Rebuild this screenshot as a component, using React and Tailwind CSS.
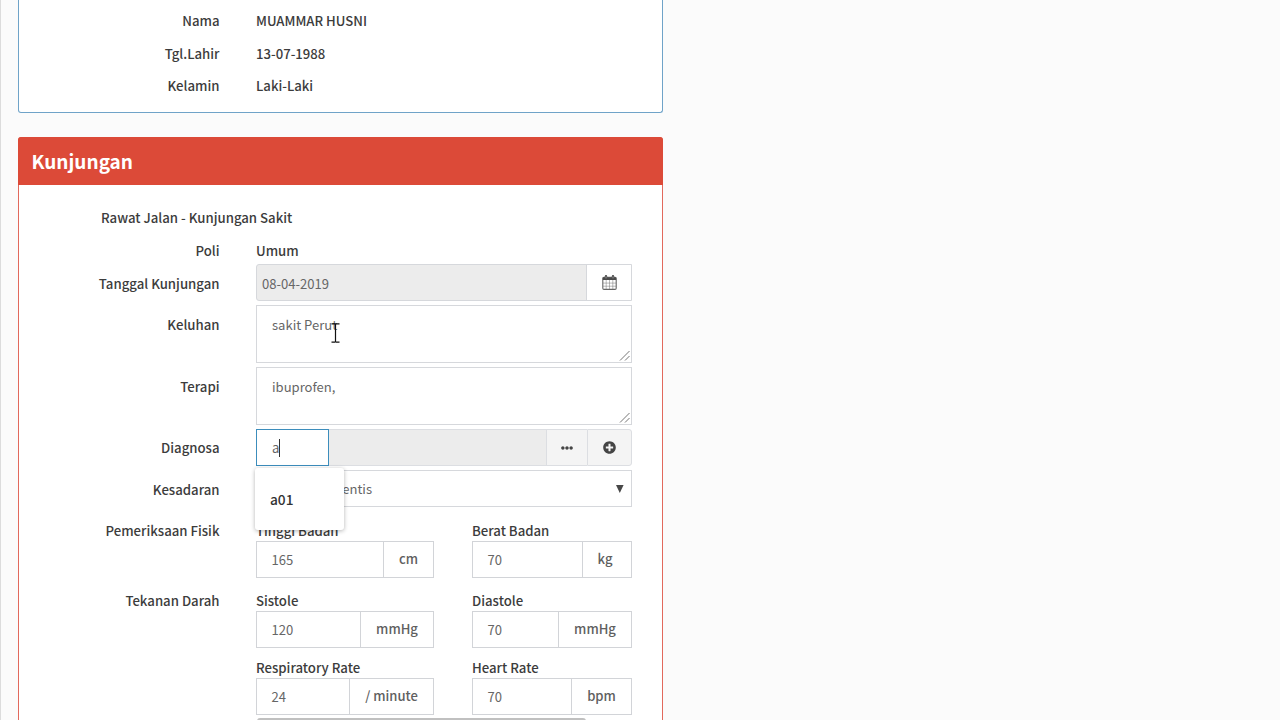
import React from "react";
import { FaEllipsisH, FaPlusCircle } from "react-icons/fa";

function InfoRow({ label, value }) {
  return (
    <div className="flex h-[32.6px] gap-9 font-medium leading-[33px]">
      <span className="w-[201px] pr-[0.5px] text-right">{label}</span>
      <span className="text-[13.15px]">{value}</span>
    </div>
  );
}

function FormRow({ label, className = "", labelClass = "leading-[37px]", children }) {
  return (
    <div className={`flex gap-9 ${className}`}>
      <span className={`h-0 w-[201px] shrink-0 pr-[0.5px] text-right font-medium ${labelClass}`}>{label}</span>
      {children}
    </div>
  );
}

function TextBox({ children }) {
  return (
    <div className="relative h-[58px] w-[376px] border border-[#d6d8dc] bg-white px-[15px] pt-2 text-[13.05px] leading-[21px] text-[#666]">
      {children}
      <svg className="absolute bottom-0 right-0 h-3 w-3" viewBox="0 0 12 12" stroke="#777" strokeWidth="1">
        <path d="M1 10.5 10.5 1M6 10.5 10.5 6" />
      </svg>
    </div>
  );
}

function UnitInput({ label, value, unit, width, unitWidth }) {
  return (
    <div className={width}>
      <div className="h-5 font-medium leading-[19px]">{label}</div>
      <div className="flex h-[37px] border border-[#d2d4d8] bg-white text-[13.05px]">
        <span className="flex-1 pl-[14.5px] leading-[35px] text-[#666]">{value}</span>
        <span className={`border-l border-[#d2d4d8] text-center font-medium leading-[33px] text-[#606060] ${unitWidth}`}>
          {unit}
        </span>
      </div>
    </div>
  );
}

function CalendarIcon() {
  return (
    <svg className="h-[15px] w-[15px]" viewBox="0 0 15 15" fill="none" stroke="#4a4a4a">
      <rect x="0.8" y="2.4" width="13.4" height="12" rx="1.2" stroke="#666" strokeWidth="1.1" />
      <path d="M.8 2.5h13.4v2.5H.8z" fill="#4a4a4a" stroke="none" />
      <path d="M4 1.2v2M11 1.2v2" strokeWidth="2.4" strokeLinecap="round" />
      <path d="M4 1.4v2M11 1.4v2" stroke="#bbb" strokeWidth=".7" />
      <path d="M4.2 5v9M7.5 5v9M10.8 5v9M1 8.1h13M1 11.2h13" stroke="#777" strokeWidth=".5" />
    </svg>
  );
}

export default function App() {
  return (
    <div className="relative h-[720px] w-[1280px] overflow-hidden border-l border-[#dcdcdc] bg-[#fbfbfb] pl-[17px] font-['Noto_Sans_CJK_JP','Noto_Sans_CJK_SC',sans-serif] text-[13.2px] text-[#3c3c3c]">
      <section className="h-[113px] w-[645px] rounded-b-[3px] border border-t-0 border-[#6fa3c8] bg-white pt-1">
        <InfoRow label="Nama" value="MUAMMAR HUSNI" />
        <InfoRow label="Tgl.Lahir" value="13-07-1988" />
        <InfoRow label="Kelamin" value="Laki-Laki" />
      </section>

      <section className="mt-6 h-[620px] w-[645px] rounded-t-[3px] border border-[#e2695c] bg-white">
        <h3 className="-mx-px -mt-px h-12 rounded-t-[3px] bg-[#dc4a38] pl-[13.5px] text-[19px] font-bold leading-[47px] text-white">
          Kunjungan
        </h3>

        <div className="pt-4">
          <div className="h-[33px] pl-[82px] font-medium leading-[33px]">Rawat Jalan - Kunjungan Sakit</div>
          <FormRow label="Poli" className="h-[30px]" labelClass="leading-[33px]">
            <span className="font-medium leading-[33px]">Umum</span>
          </FormRow>

          <FormRow label="Tanggal Kunjungan" className="mb-1" labelClass="leading-[39px]">
            <div className="flex h-[37px] w-[376px] rounded-l-[3px] border border-[#d6d8dc] bg-[#ececec] text-[13.05px] leading-[37px]">
              <span className="flex-1 pl-[5px] text-[#666]">08-04-2019</span>
              <span className="flex w-[45px] items-center justify-center border-l border-[#d6d8dc] bg-white">
                <CalendarIcon />
              </span>
            </div>
          </FormRow>

          <FormRow label="Keluhan" className="mb-1" labelClass="leading-[39px]">
            <TextBox>sakit Perut</TextBox>
          </FormRow>
          <FormRow label="Terapi" className="mb-1" labelClass="leading-[39px]">
            <TextBox>ibuprofen,</TextBox>
          </FormRow>

          <FormRow label="Diagnosa" className="mb-1">
            <div className="relative flex h-[37px] w-[376px]">
              <div className="flex w-[73px] items-center border border-[#3c8dbc] bg-white pl-[15px] text-[#666]">
                a<span className="h-[18px] w-px bg-[#333]" />
              </div>
              <div className="flex-1 border-y border-[#dcdee2] bg-[#ececec]" />
              <div className="flex w-[41px] items-center justify-center border border-r-0 border-[#dcdee2] bg-[#f4f4f4]">
                <FaEllipsisH size={12} color="#444" />
              </div>
              <div className="flex w-[45px] items-center justify-center rounded-r-[3px] border border-[#dcdee2] bg-[#f4f4f4]">
                <FaPlusCircle size={13} color="#444" />
              </div>
              <div className="absolute -left-px top-[39px] z-10 h-[62px] w-[89px] rounded-[3px] bg-white pl-[15px] text-[13.7px] font-medium leading-[62px] text-[#333] shadow-[0_1px_4px_rgba(0,0,0,0.3)]">
                a01
              </div>
            </div>
          </FormRow>

          <FormRow label="Kesadaran" labelClass="leading-[39px]">
            <div className="flex h-[37px] w-[376px] items-center justify-between border border-[#d6d8dc] bg-white pl-[15px] pr-[7px] text-[13.05px] text-[#666]">
              <span className="w-[100px] whitespace-nowrap pt-px text-right">Compos mentis</span>
              <svg className="h-2 w-2" viewBox="0 0 8 8">
                <path d="M0 0h7.6L3.8 8z" fill="#484848" />
              </svg>
            </div>
          </FormRow>

          <FormRow label="Pemeriksaan Fisik" className="mt-[14px]" labelClass="leading-[19px]">
            <div className="flex gap-[38px]">
              <UnitInput label="Tinggi Badan" value="165" unit="cm" width="w-[178px]" unitWidth="w-[50px]" />
              <UnitInput label="Berat Badan" value="70" unit="kg" width="w-[160px]" unitWidth="w-[49px] pr-1" />
            </div>
          </FormRow>
          <FormRow label="Tekanan Darah" className="mt-[13px]" labelClass="leading-[19px]">
            <div className="flex gap-[38px]">
              <UnitInput label="Sistole" value="120" unit="mmHg" width="w-[178px]" unitWidth="w-[73px]" />
              <UnitInput label="Diastole" value="70" unit="mmHg" width="w-[160px]" unitWidth="w-[73px]" />
            </div>
          </FormRow>
          <FormRow label="" className="mt-[10px]">
            <div className="flex gap-[38px]">
              <UnitInput label="Respiratory Rate" value="24" unit="/ minute" width="w-[178px]" unitWidth="w-[84px]" />
              <UnitInput label="Heart Rate" value="70" unit="bpm" width="w-[160px]" unitWidth="w-[60px]" />
            </div>
          </FormRow>
          <div className="ml-[238px] mt-[3px] h-3 w-[329px] rounded-t-[3px] bg-[#c0c0c0]" />
        </div>
      </section>

      {/* text pointer */}
      <svg className="absolute left-[330px] top-[323px] h-5 w-[9px]" viewBox="0 0 9 20" fill="none" stroke="#111" strokeWidth="1.2">
        <path d="M.5.8h3.2l.8.7.8-.7h3.2M4.5 1.5v17M.5 19.2h3.2l.8-.7.8.7h3.2" />
      </svg>
    </div>
  );
}
